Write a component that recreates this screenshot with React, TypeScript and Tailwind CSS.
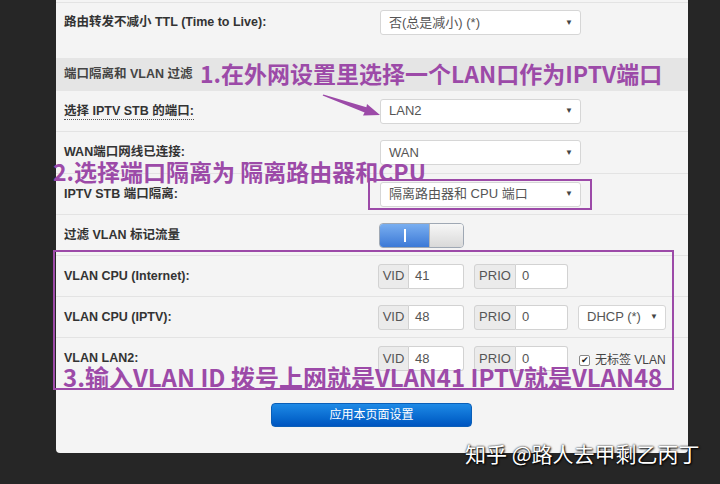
import React from 'react';

const labelFont = { fontFamily: '"Liberation Sans", Arial, "Noto Sans CJK SC", sans-serif' };
const noteFont = { fontFamily: '"Noto Sans CJK SC", "Noto Sans", sans-serif' };

function Select({ value, width = 'w-[201px]' }: { value: string; width?: string }) {
  return (
    <div
      className={`${width} h-[25px] bg-white border border-[#d6d6d6] rounded-[3px] flex items-center justify-between pl-[8px] pr-[7px] text-[13px] text-[#555]`}
    >
      <span>{value}</span>
      <span className="text-[8px] text-[#444]">▼</span>
    </div>
  );
}

function InputGroup({ addon, value, addonW, inputW }: { addon: string; value: string; addonW: string; inputW: string }) {
  return (
    <div className="flex h-[25px] text-[13px] text-[#555]">
      <div className={`${addonW} bg-[#ebebeb] border border-[#d2d2d2] rounded-l-[3px] flex items-center justify-center`}>
        {addon}
      </div>
      <div className={`${inputW} bg-white border border-l-0 border-[#d2d2d2] rounded-r-[3px] flex items-center pl-[6px]`}>
        {value}
      </div>
    </div>
  );
}

function Row({ label, children, h = 'h-[41px]', border = true, dotted = false }: { label: string; children?: React.ReactNode; h?: string; border?: boolean; dotted?: boolean }) {
  return (
    <div className={`${h} flex items-center ${border ? 'border-t border-[#e3e3e3]' : ''}`}>
      <div className="w-[324px] pl-[8px] text-[12.5px] font-bold text-[#333]">
        <span className={dotted ? 'border-b border-dotted border-[#555] pb-[1px]' : ''}>{label}</span>
      </div>
      <div className="flex items-center">{children}</div>
    </div>
  );
}

export default function App() {
  const purple = '#9c4aa8';
  return (
    <div className="relative w-[720px] h-[484px] bg-[#262626] overflow-hidden" style={labelFont}>
      <div className="ml-[56px] w-[632px] bg-[#f4f4f4] rounded-b-[4px]">
        <div className="h-[2px]" />
        <Row label="路由转发不减小 TTL (Time to Live):" h="h-[40px]">
          <Select value="否(总是减小) (*)" />
        </Row>
        <div className="h-[16px]" />
        <div className="h-[33px] bg-[#e5e5e5] flex items-center pl-[8px] text-[12.5px] font-bold text-[#444]">
          端口隔离和 VLAN 过滤
        </div>
        <Row label="选择 IPTV STB 的端口:" h="h-[40px]" border={false} dotted>
          <Select value="LAN2" />
        </Row>
        <Row label="WAN端口网线已连接:" h="h-[42px]">
          <Select value="WAN" />
        </Row>
        <Row label="IPTV STB 端口隔离:">
          <Select value="隔离路由器和 CPU 端口" />
        </Row>
        <Row label="过滤 VLAN 标记流量">
          <div className="ml-[-1px] w-[85px] h-[25px] flex rounded-[4px] border border-[#9fa8b4] overflow-hidden">
            <div className="w-[49px] bg-gradient-to-b from-[#79aef0] to-[#3c79d6] flex items-center justify-center">
              <div className="w-[2px] h-[13px] bg-white" />
            </div>
            <div className="flex-1 bg-gradient-to-b from-[#f7f7f7] to-[#d9d9d9] border-l border-[#b5b5b5]" />
          </div>
        </Row>
        <Row label="VLAN CPU (Internet):">
          <div className="ml-[-2px] flex gap-[10px]">
            <InputGroup addon="VID" value="41" addonW="w-[31px]" inputW="w-[55px]" />
            <InputGroup addon="PRIO" value="0" addonW="w-[42px]" inputW="w-[52px]" />
          </div>
        </Row>
        <Row label="VLAN CPU (IPTV):">
          <div className="ml-[-2px] flex gap-[10px]">
            <InputGroup addon="VID" value="48" addonW="w-[31px]" inputW="w-[55px]" />
            <InputGroup addon="PRIO" value="0" addonW="w-[42px]" inputW="w-[52px]" />
            <Select value="DHCP (*)" width="w-[88px]" />
          </div>
        </Row>
        <Row label="VLAN LAN2:" h="h-[42px]">
          <div className="ml-[-2px] flex gap-[10px] items-center">
            <InputGroup addon="VID" value="48" addonW="w-[31px]" inputW="w-[55px]" />
            <InputGroup addon="PRIO" value="0" addonW="w-[42px]" inputW="w-[52px]" />
            <div className="flex items-center gap-[5px] ml-[1px] mt-[3px] text-[12px] text-[#444]">
              <div className="w-[11px] h-[11px] bg-white border border-[#888] rounded-[2px] flex items-center justify-center text-[9px] leading-none text-[#222]">
                ✔
              </div>
              <span>无标签 VLAN</span>
            </div>
          </div>
        </Row>
        <div className="pt-[24px] pb-[26px] flex">
          <div className="ml-[215px] w-[201px] h-[24px] rounded-[4px] bg-gradient-to-b from-[#1e8ae6] to-[#0055c0] border border-[#0a5fb8] flex items-center justify-center text-[12px] text-white">
            应用本页面设置
          </div>
        </div>
      </div>

      {/* annotations */}
      <div
        className="absolute left-[200px] top-[62px] text-[23px] leading-none font-bold whitespace-nowrap"
        style={{ ...noteFont, color: purple }}
      >
        1.在外网设置里选择一个LAN口作为IPTV端口
      </div>
      <div
        className="absolute left-[53px] top-[160px] text-[23px] leading-none font-bold whitespace-nowrap"
        style={{ ...noteFont, color: purple }}
      >
        2.选择端口隔离为 隔离路由器和CPU
      </div>
      <div
        className="absolute left-[63px] top-[365px] text-[24px] leading-none font-bold whitespace-nowrap"
        style={{ ...noteFont, color: purple }}
      >
        3.输入VLAN ID 拨号上网就是VLAN41 IPTV就是VLAN48
      </div>
      <div className="absolute left-[368px] top-[179px] w-[224px] h-[31px] border-2 border-[#9c4aa8]" />
      <div className="absolute left-[53px] top-[250px] w-[621px] h-[140px] border-2 border-[#9c4aa8]" />

      <svg className="absolute left-0 top-0 pointer-events-none" width="720" height="484">
        <polygon
          points="323,95 323.4,94.5 366.4,107.3 367,104 380,115 363,115.5 364.6,112.4 322.6,95.5"
          fill={purple}
        />
      </svg>

      <div
        className="absolute left-[465px] top-[443px] text-[21px] leading-none text-white whitespace-nowrap"
        style={{ ...noteFont, textShadow: '0 0 2px #000, 1px 1px 2px #000' }}
      >
        知乎 @路人去甲剩乙丙丁
      </div>
    </div>
  );
}
